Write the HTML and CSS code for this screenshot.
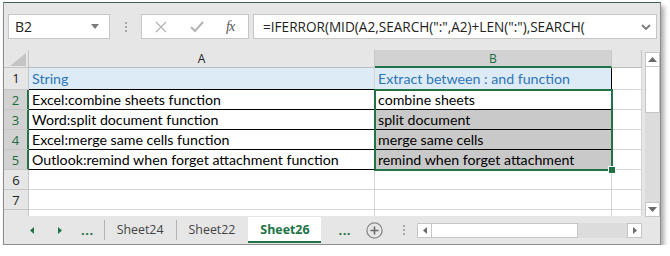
FILE: index.html
```html
<!DOCTYPE html>
<html>
<head>
<meta charset="utf-8">
<link rel="stylesheet" href="styles.css">
</head>
<body>
<div class="window">
  <div class="fbar">
    <div class="namebox"><span class="nb-text">B2</span><svg class="nb-arrow" width="8" height="5" viewBox="0 0 8 5"><path d="M0 0H8L4 5Z" fill="#7a7a7a"/></svg></div>
    <div class="vdots"><i></i><i></i><i></i></div>
    <div class="btnbox">
      <svg class="ico" width="12" height="12" viewBox="0 0 12 12"><path d="M1 1L11 11M11 1L1 11" stroke="#b4b4b4" stroke-width="1.3"/></svg>
      <svg class="ico" width="14" height="12" viewBox="0 0 14 12"><path d="M1 6L5 10L13 1" stroke="#b4b4b4" stroke-width="2" fill="none"/></svg>
      <span class="fx">fx</span>
    </div>
    <div class="formula"><span>=IFERROR(MID(A2,SEARCH(":",A2)+LEN(":"),SEARCH(</span><svg width="10" height="6" viewBox="0 0 10 6"><path d="M1 1L5 5L9 1" stroke="#7a7a7a" stroke-width="1.8" fill="none"/></svg></div>
  </div>
  <div class="main">
    <div class="sheet">
      <div class="corner"><svg width="16" height="13" viewBox="0 0 16 13"><path d="M16 0V13H0Z" fill="#c4c4c4"/></svg></div>
      <div class="ch">A</div>
      <div class="ch sel">B</div>
      <div class="ch"></div>

      <div class="rh">1</div>
      <div class="c hd">String</div>
      <div class="c hd br">Extract between : and function</div>
      <div class="c"></div>

      <div class="rh sel">2</div>
      <div class="c bx">Excel:combine sheets function</div>
      <div class="c bx">combine sheets</div>
      <div class="c"></div>

      <div class="rh sel">3</div>
      <div class="c bx">Word:split document function</div>
      <div class="c bx gr">split document</div>
      <div class="c"></div>

      <div class="rh sel">4</div>
      <div class="c bx">Excel:merge same cells function</div>
      <div class="c bx gr">merge same cells</div>
      <div class="c"></div>

      <div class="rh sel">5</div>
      <div class="c bx">Outlook:remind when forget attachment function</div>
      <div class="c bx gr">remind when forget attachment</div>
      <div class="c"></div>

      <div class="rh">6</div>
      <div class="c"></div>
      <div class="c"></div>
      <div class="c"></div>

      <div class="rh">7</div>
      <div class="c"></div>
      <div class="c"></div>
      <div class="c"></div>

      <div class="rh part"></div>
      <div class="c part"></div>
      <div class="c part"></div>
      <div class="c part"></div>

      <div class="selbox"></div>
      <div class="handle"></div>
    </div>
    <div class="vscroll">
      <div class="vbtn"><svg width="9" height="5" viewBox="0 0 9 5"><path d="M0 5H9L4.5 0Z" fill="#6a6a6a"/></svg></div>
      <div class="vthumb"></div>
      <div class="vtrack"></div>
      <div class="vbtn"><svg width="9" height="5" viewBox="0 0 9 5"><path d="M0 0H9L4.5 5Z" fill="#6a6a6a"/></svg></div>
    </div>
  </div>
  <div class="tabs">
    <svg class="nav nav-l" width="4" height="7" viewBox="0 0 4 7"><path d="M4 0V7L0 3.5Z" fill="#217346"/></svg>
    <svg class="nav nav-r" width="4" height="7" viewBox="0 0 4 7"><path d="M0 0V7L4 3.5Z" fill="#217346"/></svg>
    <span class="more">...</span>
    <span class="tsep first"></span>
    <span class="tab">Sheet24</span>
    <span class="tsep"></span>
    <span class="tab">Sheet22</span>
    <span class="tab active">Sheet26</span>
    <span class="more more2">...</span>
    <svg class="plus" width="17" height="17" viewBox="0 0 17 17"><circle cx="8.5" cy="8.5" r="7.6" fill="none" stroke="#8a8a8a" stroke-width="1.3"/><path d="M8.5 4.5V12.5M4.5 8.5H12.5" stroke="#6a6a6a" stroke-width="1.6"/></svg>
    <span class="vdots2"><i></i><i></i><i></i></span>
    <div class="hscroll">
      <div class="hbtn"><svg width="4" height="7" viewBox="0 0 4 7"><path d="M4 0V7L0 3.5Z" fill="#6a6a6a"/></svg></div>
      <div class="hthumb"></div>
      <div class="htrack"></div>
      <div class="hbtn"><svg width="4" height="7" viewBox="0 0 4 7"><path d="M0 0V7L4 3.5Z" fill="#6a6a6a"/></svg></div>
    </div>
  </div>
</div>
</body>
</html>
```

FILE: styles.css
```css
* { box-sizing: border-box; }
body {
  margin: 0;
  background: #ffffff;
  font-family: "Open Sans", "Noto Sans", sans-serif;
}
.window {
  margin: 2px 0 0 3px;
  width: 658px;
  height: 243px;
  background: #e6e6e6;
  border: 1px solid #8c8c8c;
  border-top-color: #44624f;
  box-shadow: 3px 4px 5px rgba(0, 0, 0, 0.35);
  display: flex;
  flex-direction: column;
}
.fbar {
  height: 47px;
  display: flex;
  align-items: center;
  padding-left: 4px;
}
.namebox {
  width: 102px;
  height: 25px;
  background: #fff;
  border: 1px solid #c6c6c6;
  display: flex;
  align-items: center;
  justify-content: space-between;
  padding: 0 10px 0 6px;
}
.nb-text { font-size: 14px; color: #222; }
.vdots {
  width: 31px;
  display: flex;
  flex-direction: column;
  align-items: center;
  gap: 2px;
}
.vdots i, .vdots2 i {
  display: block;
  width: 2px;
  height: 2px;
  background: #a8a8a8;
}
.btnbox {
  width: 108px;
  height: 25px;
  background: #fff;
  border: 1px solid #c6c6c6;
  display: flex;
  align-items: center;
  padding-left: 13px;
}
.btnbox .ico:nth-child(1) { margin-right: 23px; }
.btnbox .ico:nth-child(2) { margin-right: 22px; }
.fx {
  font-family: "Liberation Serif", serif;
  font-style: italic;
  font-size: 14px;
  color: #555;
  letter-spacing: -1px;
}
.formula {
  margin-left: 4px;
  width: 404px;
  height: 25px;
  background: #fff;
  border: 1px solid #c6c6c6;
  display: flex;
  align-items: center;
  justify-content: space-between;
  padding: 0 5px 0 9px;
  font-size: 13.6px;
  color: #222;
}
.main {
  display: flex;
  height: 166px;
}
.sheet {
  position: relative;
  display: grid;
  grid-template-columns: 25px 346px 237px 30px;
  grid-template-rows: 18px 22px 20px 20px 20px 20px 20px 20px 6px;
  background: #fff;
}
.corner {
  background: #e6e6e6;
  border-right: 1px solid #c6c6c6;
  border-bottom: 1px solid #c6c6c6;
  display: flex;
  align-items: flex-end;
  justify-content: flex-end;
  padding: 0 2px 1px 0;
}
.ch {
  background: #e6e6e6;
  border-right: 1px solid #c6c6c6;
  border-bottom: 1px solid #bdbdbd;
  font-size: 12px;
  color: #222;
  text-align: center;
  line-height: 17px;
}
.ch.sel {
  background: #d2d2d2;
  color: #1e6b3f;
  border-bottom: 2px solid #217346;
}
.rh {
  background: #e6e6e6;
  border-right: 1px solid #c6c6c6;
  border-bottom: 1px solid #c6c6c6;
  font-size: 13px;
  color: #222;
  text-align: center;
  line-height: 20px;
}
.rh.sel {
  background: #d2d2d2;
  color: #1e6b3f;
  border-right: 2px solid #217346;
}
.c {
  border-right: 1px solid #d4d4d4;
  border-bottom: 1px solid #d4d4d4;
  font-family: "Lato", sans-serif;
  font-size: 14.2px;
  color: #000;
  padding-left: 3px;
  line-height: 20px;
  white-space: nowrap;
  overflow: hidden;
}
.c.hd {
  background: #ddebf7;
  color: #2e75b6;
  border-bottom-color: #000;
  line-height: 22px;
}
.c.br { border-right-color: #000; }
.c.bx {
  border-right-color: #000;
  border-bottom-color: #000;
}
.c.gr { background: #c9c9c9; }
.rh.part { border-bottom: none; }
.c.part { border-bottom: none; }
.selbox {
  position: absolute;
  left: 370px;
  top: 39px;
  width: 239px;
  height: 82px;
  border: 2px solid #217346;
  pointer-events: none;
}
.handle {
  position: absolute;
  left: 605px;
  top: 117px;
  width: 6px;
  height: 6px;
  background: #217346;
  border: 1px solid #fff;
  box-sizing: content-box;
  margin: -1px 0 0 -1px;
}
.vscroll {
  margin-left: 3px;
  margin-top: 2px;
  width: 15px;
  display: flex;
  flex-direction: column;
  height: 165px;
}
.vbtn {
  height: 15px;
  background: #fff;
  border: 1px solid #c6c6c6;
  display: flex;
  align-items: center;
  justify-content: center;
}
.vthumb {
  height: 46px;
  background: #fff;
  border: 1px solid #c6c6c6;
  border-top: none;
}
.vtrack {
  flex: 1;
  background: #dcdcdc;
}
.tabs {
  flex: 1;
  display: flex;
  align-items: center;
  padding-right: 18px;
  font-size: 12.4px;
  color: #444;
}
.nav-l { margin-left: 26px; }
.nav-r { margin-left: 24px; }
.more {
  margin-left: 19px;
  color: #217346;
  font-weight: bold;
  font-size: 13px;
  letter-spacing: 0.5px;
}
.tsep {
  width: 1px;
  height: 20px;
  background: #b4b4b4;
}
.tsep.first { margin-left: 10px; }
.tab {
  padding: 0 12px;
  height: 26px;
  line-height: 26px;
}
.tab.active {
  margin-left: 1px;
  width: 73px;
  padding: 0;
  text-align: center;
  background: #fff;
  color: #217346;
  font-weight: bold;
  border-bottom: 2px solid #217346;
}
.more2 { margin-left: 17px; }
.plus { margin-left: 15px; }
.vdots2 {
  display: flex;
  flex-direction: column;
  gap: 2px;
  margin-left: 20px;
}
.hscroll {
  margin-left: auto;
  width: 225px;
  height: 15px;
  display: flex;
}
.hbtn {
  width: 15px;
  background: #fff;
  border: 1px solid #c6c6c6;
  display: flex;
  align-items: center;
  justify-content: center;
}
.hthumb {
  width: 146px;
  background: #fff;
  border: 1px solid #c6c6c6;
  border-left: none;
}
.htrack {
  flex: 1;
  background: #dcdcdc;
}
```
